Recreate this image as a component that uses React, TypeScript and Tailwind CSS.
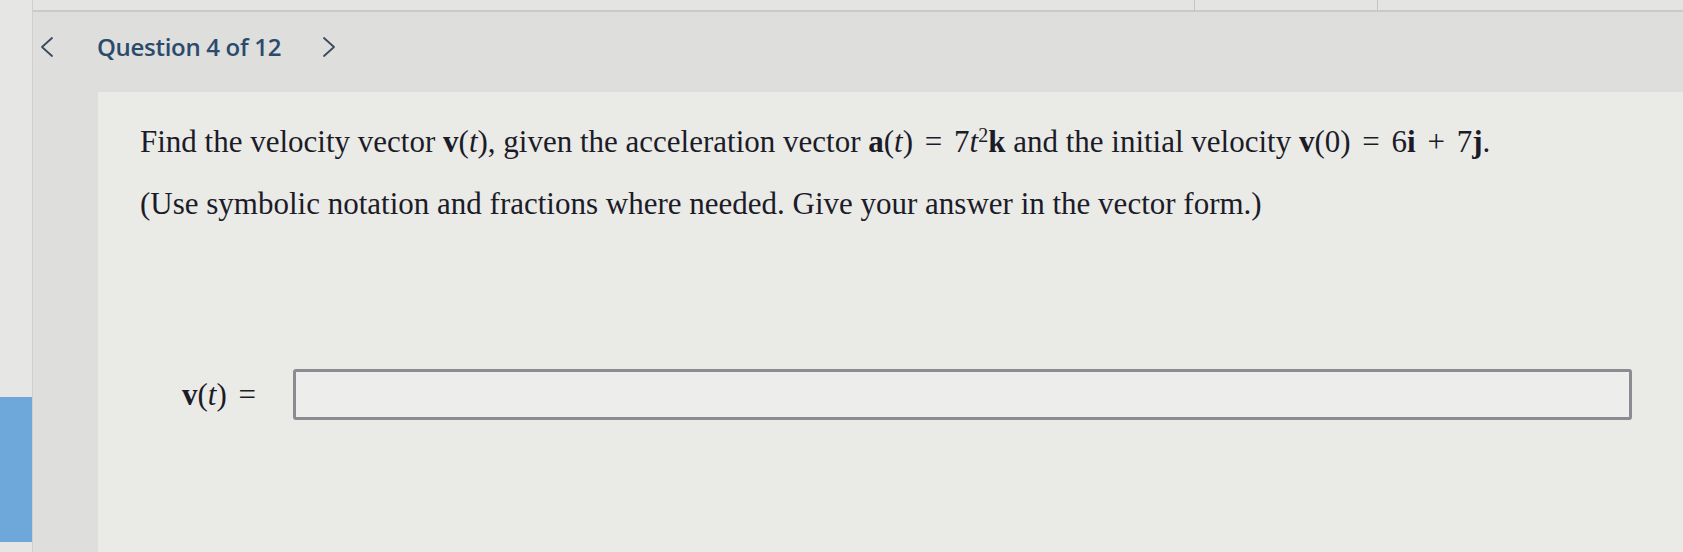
import React from 'react';

function Chevron({ dir }: { dir: 'left' | 'right' }) {
  return (
    <svg width="16" height="22" viewBox="0 0 16 22" fill="none" className="text-[#3a4a5c]">
      <polyline
        points={dir === 'left' ? '13,2 3,11 13,20' : '3,2 13,11 3,20'}
        stroke="currentColor"
        strokeWidth="1.8"
        strokeLinecap="round"
        strokeLinejoin="round"
      />
    </svg>
  );
}

const serif = { fontFamily: '"Liberation Serif", "Times New Roman", serif' };

// relation / binary operator with a little extra math spacing
function Op({ children }: { children: React.ReactNode }) {
  return <span className="px-[4px]">{children}</span>;
}

export default function App() {
  return (
    <div className="flex h-[552px] w-full overflow-hidden bg-[#dededc]">
      {/* sidebar */}
      <div className="flex w-[33px] shrink-0 flex-col border-r border-[#cfcfcd] bg-[#e6e6e4]">
        <div className="mt-[397px] h-[145px] w-full bg-[#6ea7d9]" />
      </div>

      <div className="flex min-w-0 flex-1 flex-col">
        {/* top tab strip */}
        <div className="flex h-[12px] shrink-0 border-b-2 border-[#c9c9c7] bg-[#e4e4e2]">
          <div className="w-[1161px]" />
          <div className="w-[183px] border-l border-[#c4c4c2]" />
          <div className="flex-1 border-l border-[#c4c4c2]" />
        </div>

        {/* header */}
        <div className="flex h-[80px] shrink-0 items-center pb-[10px]">
          <div className="ml-[6px] flex w-[16px] justify-center">
            <Chevron dir="left" />
          </div>
          <span
            className="ml-[42px] text-[24px] font-semibold tracking-[-0.3px] text-[#2b4a6c]"
            style={{ fontFamily: '"Open Sans", "Noto Sans", sans-serif' }}
          >
            Question 4 of 12
          </span>
          <div className="ml-[40px] flex w-[16px] justify-center">
            <Chevron dir="right" />
          </div>
        </div>

        {/* card */}
        <div className="ml-[65px] flex-1 bg-[#eaeae7] pl-[42px] pt-[19px] text-[#1c1b28]" style={serif}>
          <p className="whitespace-nowrap text-[31px] leading-[62px]">
            Find the velocity vector <b>v</b>(<i>t</i>), given the acceleration vector <b>a</b>(<i>t</i>)
            {' '}<Op>=</Op>{' '}7<i>t</i>
            <sup className="text-[20px]">2</sup>
            <b>k</b> and the initial velocity <b>v</b>(0) <Op>=</Op> 6<b>i</b> <Op>+</Op> 7<b>j</b>.
          </p>
          <p className="whitespace-nowrap text-[31px] leading-[62px]">
            (Use symbolic notation and fractions where needed. Give your answer in the vector form.)
          </p>

          <div className="ml-[42px] mt-[134px] flex items-center">
            <span className="w-[111px] whitespace-nowrap text-[31px] leading-none">
              <b>v</b>(<i>t</i>) <Op>=</Op>
            </span>
            <div className="h-[51px] w-[1339px] rounded-[3px] border-[3px] border-[#8b8b92] bg-[#ededeb]" />
          </div>
        </div>
      </div>
    </div>
  );
}
